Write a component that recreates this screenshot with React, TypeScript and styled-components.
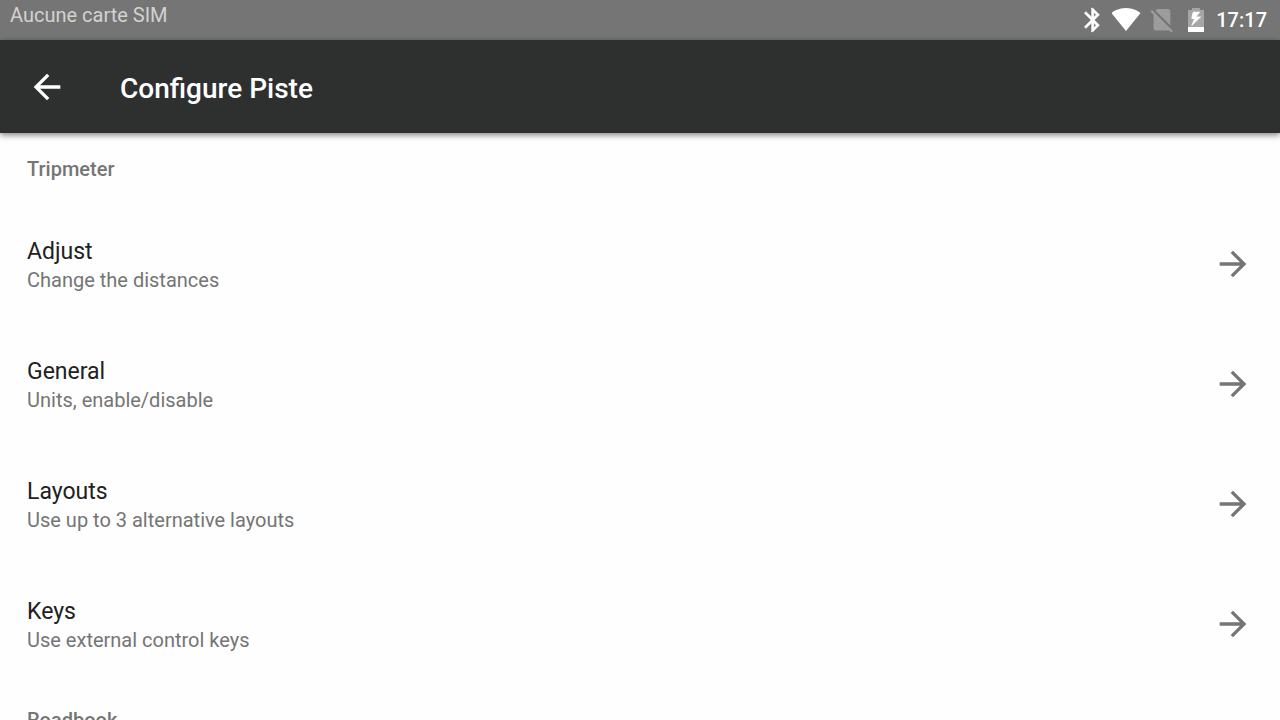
import React from "react";
import styled, { createGlobalStyle } from "styled-components";

const GlobalStyle = createGlobalStyle`
  *, *::before, *::after { box-sizing: border-box; }
  body {
    margin: 0;
    background: #fefefe;
    font-family: Roboto, "Liberation Sans", sans-serif;
  }
`;

const Screen = styled.div`
  height: 100vh;
  display: flex;
  flex-direction: column;
  overflow: hidden;
`;

const StatusBar = styled.div`
  flex: none;
  height: 40px;
  padding: 0 13px 0 10px;
  display: flex;
  justify-content: space-between;
  background: #757575;
`;

const Carrier = styled.span`
  font-size: 20px;
  line-height: 30px;
  color: #d2d2d2;
`;

const StatusIcons = styled.div`
  display: flex;
  align-items: center;
  gap: 6px;
  color: #fff;

  svg { display: block; }
`;

const Clock = styled.time`
  font-size: 20px;
  line-height: 24px;
  font-weight: 500;
`;

const AppBar = styled.header`
  flex: none;
  z-index: 1;
  height: 93px;
  padding: 0 27px;
  display: flex;
  align-items: center;
  gap: 53px;
  background: #2e302f;
  color: #fff;
  box-shadow: 0 2px 6px rgba(0, 0, 0, 0.5);
`;

const BackButton = styled.button`
  width: 40px;
  height: 40px;
  padding: 0;
  border: 0;
  background: none;
  color: inherit;
  cursor: pointer;

  svg { display: block; }
`;

const Title = styled.h1`
  margin: 0;
  padding-top: 4px;
  font-size: 28px;
  line-height: 36px;
  font-weight: 500;
`;

const Settings = styled.main`
  flex: 1;
  min-height: 0;
  overflow: hidden;
`;

const SectionTitle = styled.h2`
  margin: 0;
  padding: 24px 27px 23px;
  font-size: 20px;
  line-height: 24px;
  font-weight: 500;
  color: #757575;
`;

const Row = styled.button`
  width: 100%;
  height: 120px;
  padding: 0 27px;
  display: flex;
  align-items: center;
  justify-content: space-between;
  border: 0;
  background: none;
  font-family: inherit;
  text-align: left;
  color: #757575;
  cursor: pointer;
`;

const RowText = styled.span`
  display: flex;
  flex-direction: column;
  padding-top: 4px;
`;

const RowTitle = styled.span`
  font-size: 23px;
  line-height: 28px;
  color: #212121;
`;

const RowSummary = styled.span`
  font-size: 20px;
  line-height: 28px;
`;

const BluetoothIcon = () => (
  <svg width="28" height="28" viewBox="0 0 28 28" fill="currentColor" aria-hidden="true">
    <path
      transform="translate(.3 -.4) scale(1.2)"
      stroke="currentColor"
      strokeWidth=".3"
      d="M17.71 7.71 12 2h-1v7.59L6.41 5 5 6.41 10.59 12 5 17.59 6.41 19 11 14.41V22h1l5.71-5.71-4.3-4.29zM13 5.83l1.88 1.88L13 9.59zm1.88 10.46L13 18.17v-3.76z"
    />
  </svg>
);

const WifiIcon = () => (
  <svg width="30" height="30" viewBox="0 0 30 30" fill="currentColor" aria-hidden="true">
    <path
      transform="translate(-1 -.8) scale(1.25)"
      d="M12.01 21.49 23.64 7c-.45-.34-4.93-4-11.64-4C5.28 3 .81 6.66.36 7l11.63 14.49.01.01z"
    />
  </svg>
);

const NoSimIcon = () => (
  <svg width="28" height="28" viewBox="0 0 28 28" fill="#9c9c9c" aria-hidden="true">
    <path
      transform="translate(-.4 -.6) scale(1.2)"
      d="M18.99 5c0-1.1-.89-2-1.99-2H8L6.5 4.18 19 16.68zM3.65 3.88 2.38 5.15 5 7.77V19c0 1.1.9 2 2 2h10.01c.35 0 .67-.1.96-.26l1.88 1.88 1.27-1.27z"
    />
  </svg>
);

const BatteryIcon = () => (
  <svg width="28" height="28" viewBox="0 0 28 28" aria-hidden="true">
    <path d="M10 2h8v2h4v18H6V4h4z" fill="#a6a6a6" />
    <path d="M6 21h16v5H6z" fill="#fff" />
    <path
      transform="translate(9.8 6.2) scale(.0196 .0186)"
      d="M73 0h319L201 259h241L4 703l153-369H0z"
      fill="#fff"
      stroke="#fff"
      strokeWidth="50"
      strokeLinejoin="round"
    />
  </svg>
);

const ArrowBackIcon = () => (
  <svg width="40" height="40" viewBox="0 0 24 24" fill="currentColor" aria-hidden="true">
    <path d="M20 11H7.83l5.59-5.59L12 4l-8 8 8 8 1.41-1.41L7.83 13H20z" />
  </svg>
);

const ArrowForwardIcon = () => (
  <svg width="40" height="40" viewBox="0 0 24 24" fill="currentColor" aria-hidden="true">
    <path d="m12 4-1.41 1.41L16.17 11H4v2h12.17l-5.58 5.59L12 20l8-8z" />
  </svg>
);

const tripmeterItems = [
  { title: "Adjust", summary: "Change the distances" },
  { title: "General", summary: "Units, enable/disable" },
  { title: "Layouts", summary: "Use up to 3 alternative layouts" },
  { title: "Keys", summary: "Use external control keys" },
];

export default function App() {
  return (
    <>
      <GlobalStyle />
      <Screen>
        <StatusBar>
          <Carrier>Aucune carte SIM</Carrier>
          <StatusIcons>
            <BluetoothIcon />
            <WifiIcon />
            <NoSimIcon />
            <BatteryIcon />
            <Clock>17:17</Clock>
          </StatusIcons>
        </StatusBar>
        <AppBar>
          <BackButton type="button" aria-label="Back">
            <ArrowBackIcon />
          </BackButton>
          <Title>Configure Piste</Title>
        </AppBar>
        <Settings>
          <SectionTitle>Tripmeter</SectionTitle>
          {tripmeterItems.map((item) => (
            <Row key={item.title} type="button">
              <RowText>
                <RowTitle>{item.title}</RowTitle>
                <RowSummary>{item.summary}</RowSummary>
              </RowText>
              <ArrowForwardIcon />
            </Row>
          ))}
          <SectionTitle>Roadbook</SectionTitle>
        </Settings>
      </Screen>
    </>
  );
}
